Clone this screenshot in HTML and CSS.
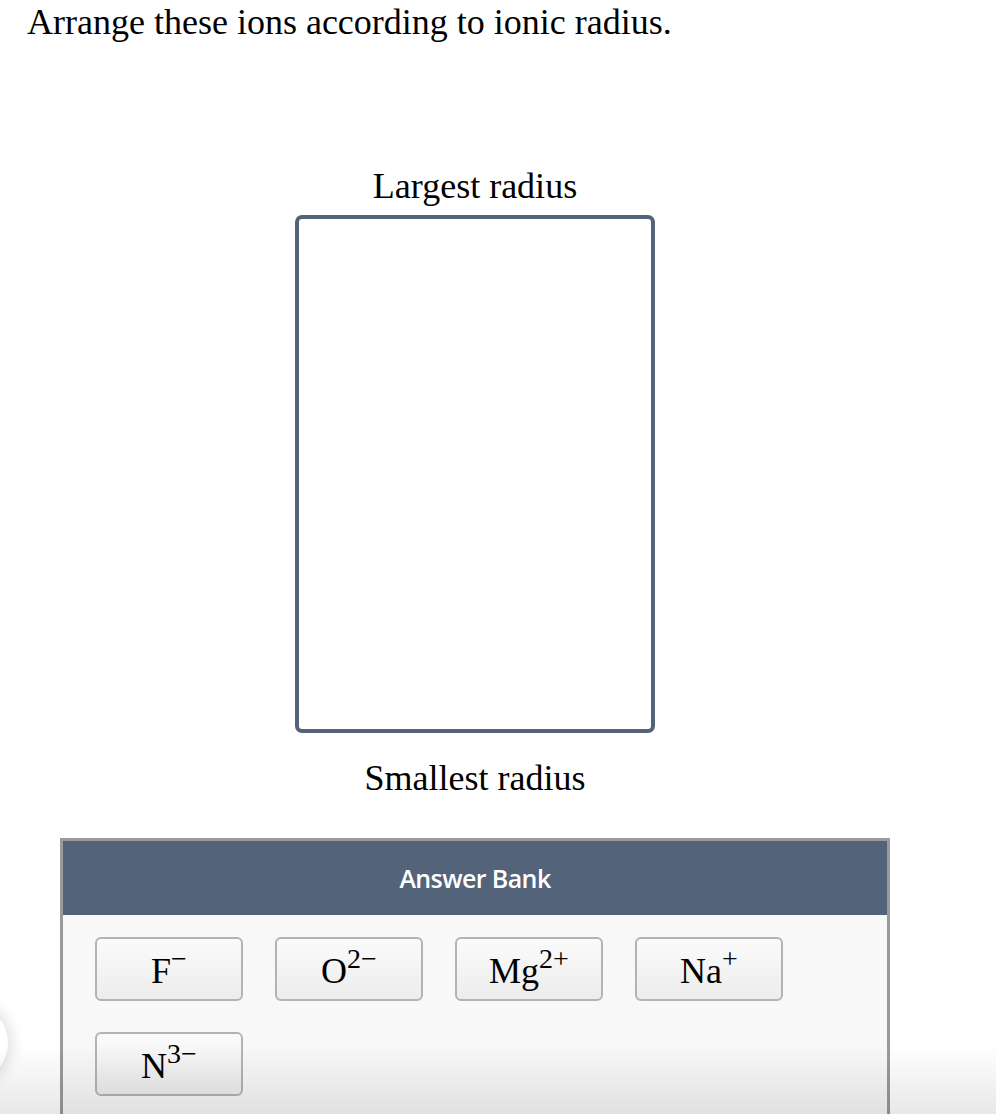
FILE: index.html
```html
<!DOCTYPE html>
<html lang="en">
<head>
    <meta charset="UTF-8">
    <meta name="viewport" content="width=device-width, initial-scale=1.0">
    <title>Ionic radius</title>
    <link rel="stylesheet" href="styles.css">
</head>
<body>
    <div class="Question">
        <h1 class="prompt">Arrange these ions according to ionic radius.</h1>

        <div class="rankArea">
            <div class="rankLabel">Largest radius</div>
            <div class="dropZone" aria-label="ranking target"></div>
            <div class="rankLabel bottom">Smallest radius</div>
        </div>

        <div class="answerBank">
            <div class="bankHeader">Answer Bank</div>
            <div class="bankItems">
                <button class="ion">F<sup>&minus;</sup></button>
                <button class="ion">O<sup>2&minus;</sup></button>
                <button class="ion">Mg<sup>2+</sup></button>
                <button class="ion">Na<sup>+</sup></button>
                <button class="ion">N<sup>3&minus;</sup></button>
            </div>
        </div>
    </div>

    <div class="floatBtn"></div>
    <div class="pageFade"></div>
</body>
</html>
```

FILE: styles.css
```css
*{margin:0;padding:0;box-sizing:border-box;}
html,body{
    width:100%;
    height:100%;
    overflow:hidden;
    background:#fff;
    font-family:"Liberation Serif","Times New Roman",serif;
    color:#000;
}

.Question{
    width:890px;
}

.prompt{
    font-size:36px;
    font-weight:normal;
    line-height:41px;
    padding-left:27px;
    padding-top:2px;
}

.rankArea{
    display:flex;
    flex-direction:column;
    align-items:center;
    margin-left:60px;
    width:830px;
    padding-top:123px;
}

.rankLabel{
    font-size:36px;
    line-height:41px;
    margin-bottom:8px;
}

.rankLabel.bottom{
    margin-top:25px;
    margin-bottom:0;
}

.dropZone{
    width:360px;
    height:518px;
    border:4px solid #536379;
    border-radius:7px;
    background:#fff;
}

.answerBank{
    margin-left:60px;
    margin-top:39px;
    width:830px;
    border:3px solid #9a9a9a;
    border-bottom:none;
    background:#f8f8f8;
    height:300px;
}

.bankHeader{
    height:74px;
    background:#536379;
    color:#fff;
    font-family:"Open Sans","Noto Sans",sans-serif;
    font-size:25px;
    font-weight:600;
    letter-spacing:-0.6px;
    display:flex;
    align-items:center;
    justify-content:center;
}

.bankItems{
    display:flex;
    flex-wrap:wrap;
    gap:31px 32px;
    padding:22px 32px;
}

.ion{
    width:148px;
    height:64px;
    border:2px solid #b3b3b3;
    border-radius:6px;
    background:linear-gradient(#fbfbfb,#ececec);
    font-family:"Liberation Serif","Times New Roman",serif;
    font-size:36px;
    color:#000;
    display:flex;
    align-items:center;
    justify-content:center;
    padding-top:3px;
}

.ion sup{
    font-size:28px;
    line-height:0;
    position:relative;
    top:-12px;
    vertical-align:baseline;
}

/* round help button that pokes in from the left edge */
.floatBtn{
    position:fixed;
    left:-72px;
    top:1003px;
    width:80px;
    height:80px;
    border-radius:50%;
    background:#fff;
    box-shadow:0 0 14px 4px rgba(0,0,0,0.12);
}

/* soft fade at the bottom of the viewport */
.pageFade{
    position:fixed;
    left:0;
    right:0;
    bottom:0;
    height:70px;
    background:linear-gradient(rgba(0,0,0,0),rgba(0,0,0,0.09));
    pointer-events:none;
}
```
